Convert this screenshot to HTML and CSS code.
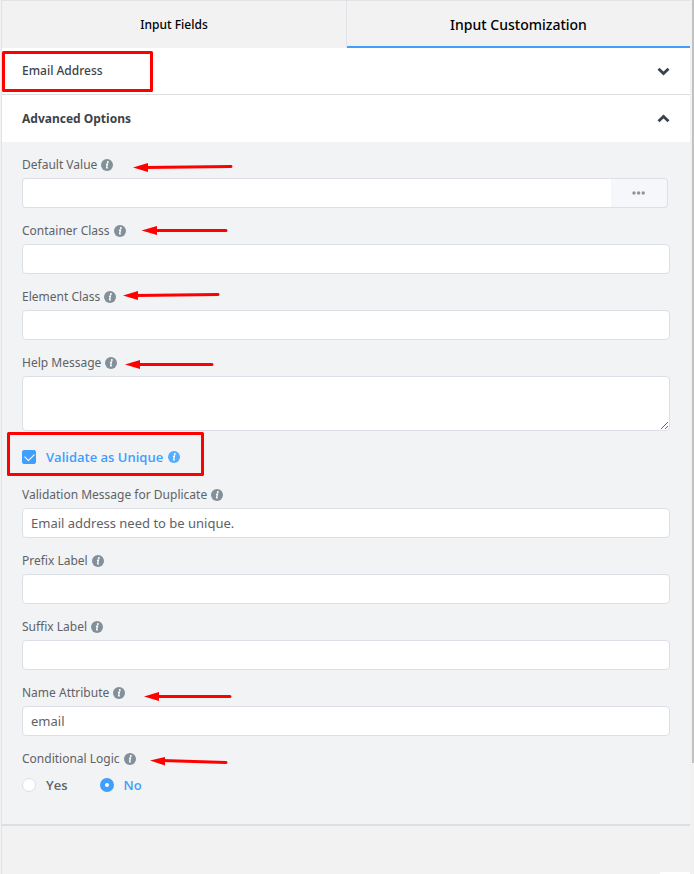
FILE: index.html
```html
<!DOCTYPE html>
<html lang="en">
<head>
<meta charset="utf-8">
<title>Input Customization</title>
<link rel="stylesheet" href="styles.css">
</head>
<body>
<svg class="defs" aria-hidden="true">
  <symbol id="info" viewBox="0 0 12 12">
    <circle cx="6" cy="6" r="6" fill="currentColor"/>
    <circle cx="6.8" cy="3" r="1" fill="#fff"/>
    <path d="M4.9 5.3 6.5 5 5.6 8.6Q5.5 9.2 6.8 8.6" fill="none" stroke="#fff" stroke-width="1.3"/>
  </symbol>
</svg>
<div class="editor">
  <main class="panel">
    <nav class="tabs">
      <button class="tab" type="button">Input Fields</button>
      <button class="tab tab-active" type="button">Input Customization</button>
    </nav>
    <button class="section" type="button">Email Address
      <svg class="chevron" viewBox="0 0 12 8"><path d="M1.4 1.4 6 5.8 10.6 1.4"/></svg>
    </button>
    <button class="section section-open" type="button">Advanced Options
      <svg class="chevron" viewBox="0 0 12 8"><path d="M1.4 6.6 6 2.2 10.6 6.6"/></svg>
    </button>
    <form class="options">
      <div class="field">
        <label class="label" for="default">Default Value <svg class="info"><use href="#info"/></svg></label>
        <div class="group">
          <input class="input group-input" id="default" type="text">
          <button class="more" type="button" aria-label="More"><svg class="dots" viewBox="0 0 14 4"><circle cx="2" cy="2" r="1.7"/><circle cx="6.6" cy="2" r="1.7"/><circle cx="11.2" cy="2" r="1.7"/></svg></button>
        </div>
      </div>
      <div class="field">
        <label class="label" for="container">Container Class <svg class="info"><use href="#info"/></svg></label>
        <input class="input" id="container" type="text">
      </div>
      <div class="field">
        <label class="label" for="element">Element Class <svg class="info"><use href="#info"/></svg></label>
        <input class="input" id="element" type="text">
      </div>
      <div class="field">
        <label class="label" for="help">Help Message <svg class="info"><use href="#info"/></svg></label>
        <textarea class="input textarea" id="help"></textarea>
      </div>
      <label class="choice unique"><input class="check" type="checkbox" checked><span>Validate as Unique</span><svg class="info info-blue"><use href="#info"/></svg></label>
      <div class="field">
        <label class="label" for="message">Validation Message for Duplicate <svg class="info"><use href="#info"/></svg></label>
        <input class="input" id="message" type="text" value="Email address need to be unique.">
      </div>
      <div class="field">
        <label class="label" for="prefix">Prefix Label <svg class="info"><use href="#info"/></svg></label>
        <input class="input" id="prefix" type="text">
      </div>
      <div class="field">
        <label class="label" for="suffix">Suffix Label <svg class="info"><use href="#info"/></svg></label>
        <input class="input" id="suffix" type="text">
      </div>
      <div class="field">
        <label class="label" for="name">Name Attribute <svg class="info"><use href="#info"/></svg></label>
        <input class="input" id="name" type="text" value="email">
      </div>
      <fieldset class="logic">
        <legend class="label">Conditional Logic <svg class="info"><use href="#info"/></svg></legend>
        <div class="radios">
          <label class="choice"><input class="radio" type="radio" name="logic"><span>Yes</span></label>
          <label class="choice chosen"><input class="radio" type="radio" name="logic" checked><span>No</span></label>
        </div>
      </fieldset>
    </form>
    <div class="footer"></div>
  </main>
  <div class="rail"><div class="thumb"></div></div>
</div>
<svg class="marks" width="694" height="874" viewBox="0 0 694 874" aria-hidden="true">
  <g fill="none" stroke="#f00" stroke-width="3" stroke-linejoin="round" stroke-linecap="round">
    <rect x="3.5" y="52.5" width="148" height="38"/>
    <rect x="8.5" y="433.5" width="194" height="41"/>
    <path d="M145 167.5 231 166.5M154 230.5H226M135 295.5 218 294.5M137 364.5H212M156 696.5H230M162 760.500 226 762.5"/>
  </g>
  <g fill="#f00">
    <path d="M133 167.5 148 163V172Z"/>
    <path d="M141.5 230.5 157 226V235Z"/>
    <path d="M123 295.5 138 291V300Z"/>
    <path d="M125 364.5 140 360V369Z"/>
    <path d="M144 696.5 159 692V701Z"/>
    <path d="M150 760.5 165 757V765.5Z"/>
  </g>
</svg>
</body>
</html>
```
FILE: styles.css
```css
* { box-sizing: border-box; }
body {
  margin: 0;
  background: #f2f2f2;
  color: #606266;
  font: 13px/20px "Noto Sans", "Open Sans", sans-serif;
}
button, input, textarea { font: inherit; color: inherit; margin: 0; }
.defs { display: none; }
.editor { display: grid; grid-template-columns: 1fr 4px; min-height: 100vh; }
.panel {
  display: flex;
  flex-direction: column;
  margin-left: 1px;
  border-left: 1px solid #e1e3e8;
  border-top: 1px solid #e1e2e6;
}
.rail { padding-left: 2px; background: #f1f1f1; }
.thumb { height: 763px; background: #c1c1c1; }
.tabs { display: grid; grid-template-columns: 1fr 1fr; height: 47px; }
.tab {
  margin-right: -1px;
  border: 0;
  border-right: 1px solid #e1e3e8;
  background: #f2f2f2;
  color: #000;
  font-size: 12px;
  font-weight: 500;
}
.tab-active {
  margin: 0 0 0 1px;
  padding-top: 3px;
  border-right: 0;
  border-bottom: 2px solid #409eff;
  font-size: 14px;
}
.section {
  display: flex;
  align-items: center;
  justify-content: space-between;
  height: 47px;
  padding: 0 20px;
  border: 0;
  border-bottom: 1px solid #dcdde0;
  background: #fff;
  color: #3c434a;
  font-size: 12px;
  font-weight: 500;
}
.section-open { border-bottom: 0; font-weight: 700; }
.chevron { width: 13px; height: 9px; fill: none; stroke: #3c434a; stroke-width: 2.6; }
.options {
  padding: 13px 20px 26px;
  border-bottom: 2px solid #dedede;
  background: #f2f3f5;
}
.field { margin-bottom: 13px; }
.label { display: flex; align-items: center; gap: 4px; height: 20px; margin-bottom: 3px; padding: 0; font-size: 12px; }
.info { width: 12px; height: 12px; color: #82909a; }
.info-blue { color: #55adff; }
.input {
  display: block;
  width: 100%;
  height: 30px;
  padding: 0 8px;
  border: 1px solid #dcdfe6;
  border-radius: 4px;
  background: #fff;
  outline: 0;
}
.textarea { height: 55px; resize: vertical; }
.group { display: flex; margin-right: 2px; }
.group-input { flex: 1; border-right: 0; border-radius: 4px 0 0 4px; }
.more {
  display: grid;
  place-items: center;
  width: 57px;
  border: 1px solid #dcdfe6;
  border-left: 0;
  border-radius: 0 4px 4px 0;
  background: #f5f7fa;
}
.dots { width: 14px; height: 4px; fill: #909399; }
.choice { display: flex; align-items: center; font-family: "Open Sans", "Noto Sans", sans-serif; font-weight: 600; }
.choice span { margin-left: 10px; }
.choice .info { margin-left: 5px; }
.unique { height: 28px; margin: -1px 0 14px; color: #409eff; }
.check, .radio { appearance: none; width: 14px; height: 14px; border: 1px solid #dcdfe6; background: #fff; }
.check { border-radius: 2px; }
.check:checked {
  display: grid;
  place-items: center;
  border-color: #409eff;
  background: #409eff;
}
.check:checked::after {
  content: "";
  width: 8px;
  height: 5px;
  margin-bottom: 3px;
  border: solid #fff;
  border-width: 0 0 1px 1px;
  transform: rotate(-45deg);
}
.radio { border-radius: 50%; }
.radio:checked { border: 5px solid #409eff; }
.logic { margin: 0; padding: 0; border: 0; }
.radios { display: flex; gap: 32px; height: 26px; }
.chosen { color: #409eff; }
.footer { flex: 1; min-height: 48px; }
.footer::after { content: ""; display: block; width: 30px; height: 2px; margin: 46px 0 0 auto; background: #fff; }
.marks { position: absolute; top: 0; left: 0; pointer-events: none; }
```
